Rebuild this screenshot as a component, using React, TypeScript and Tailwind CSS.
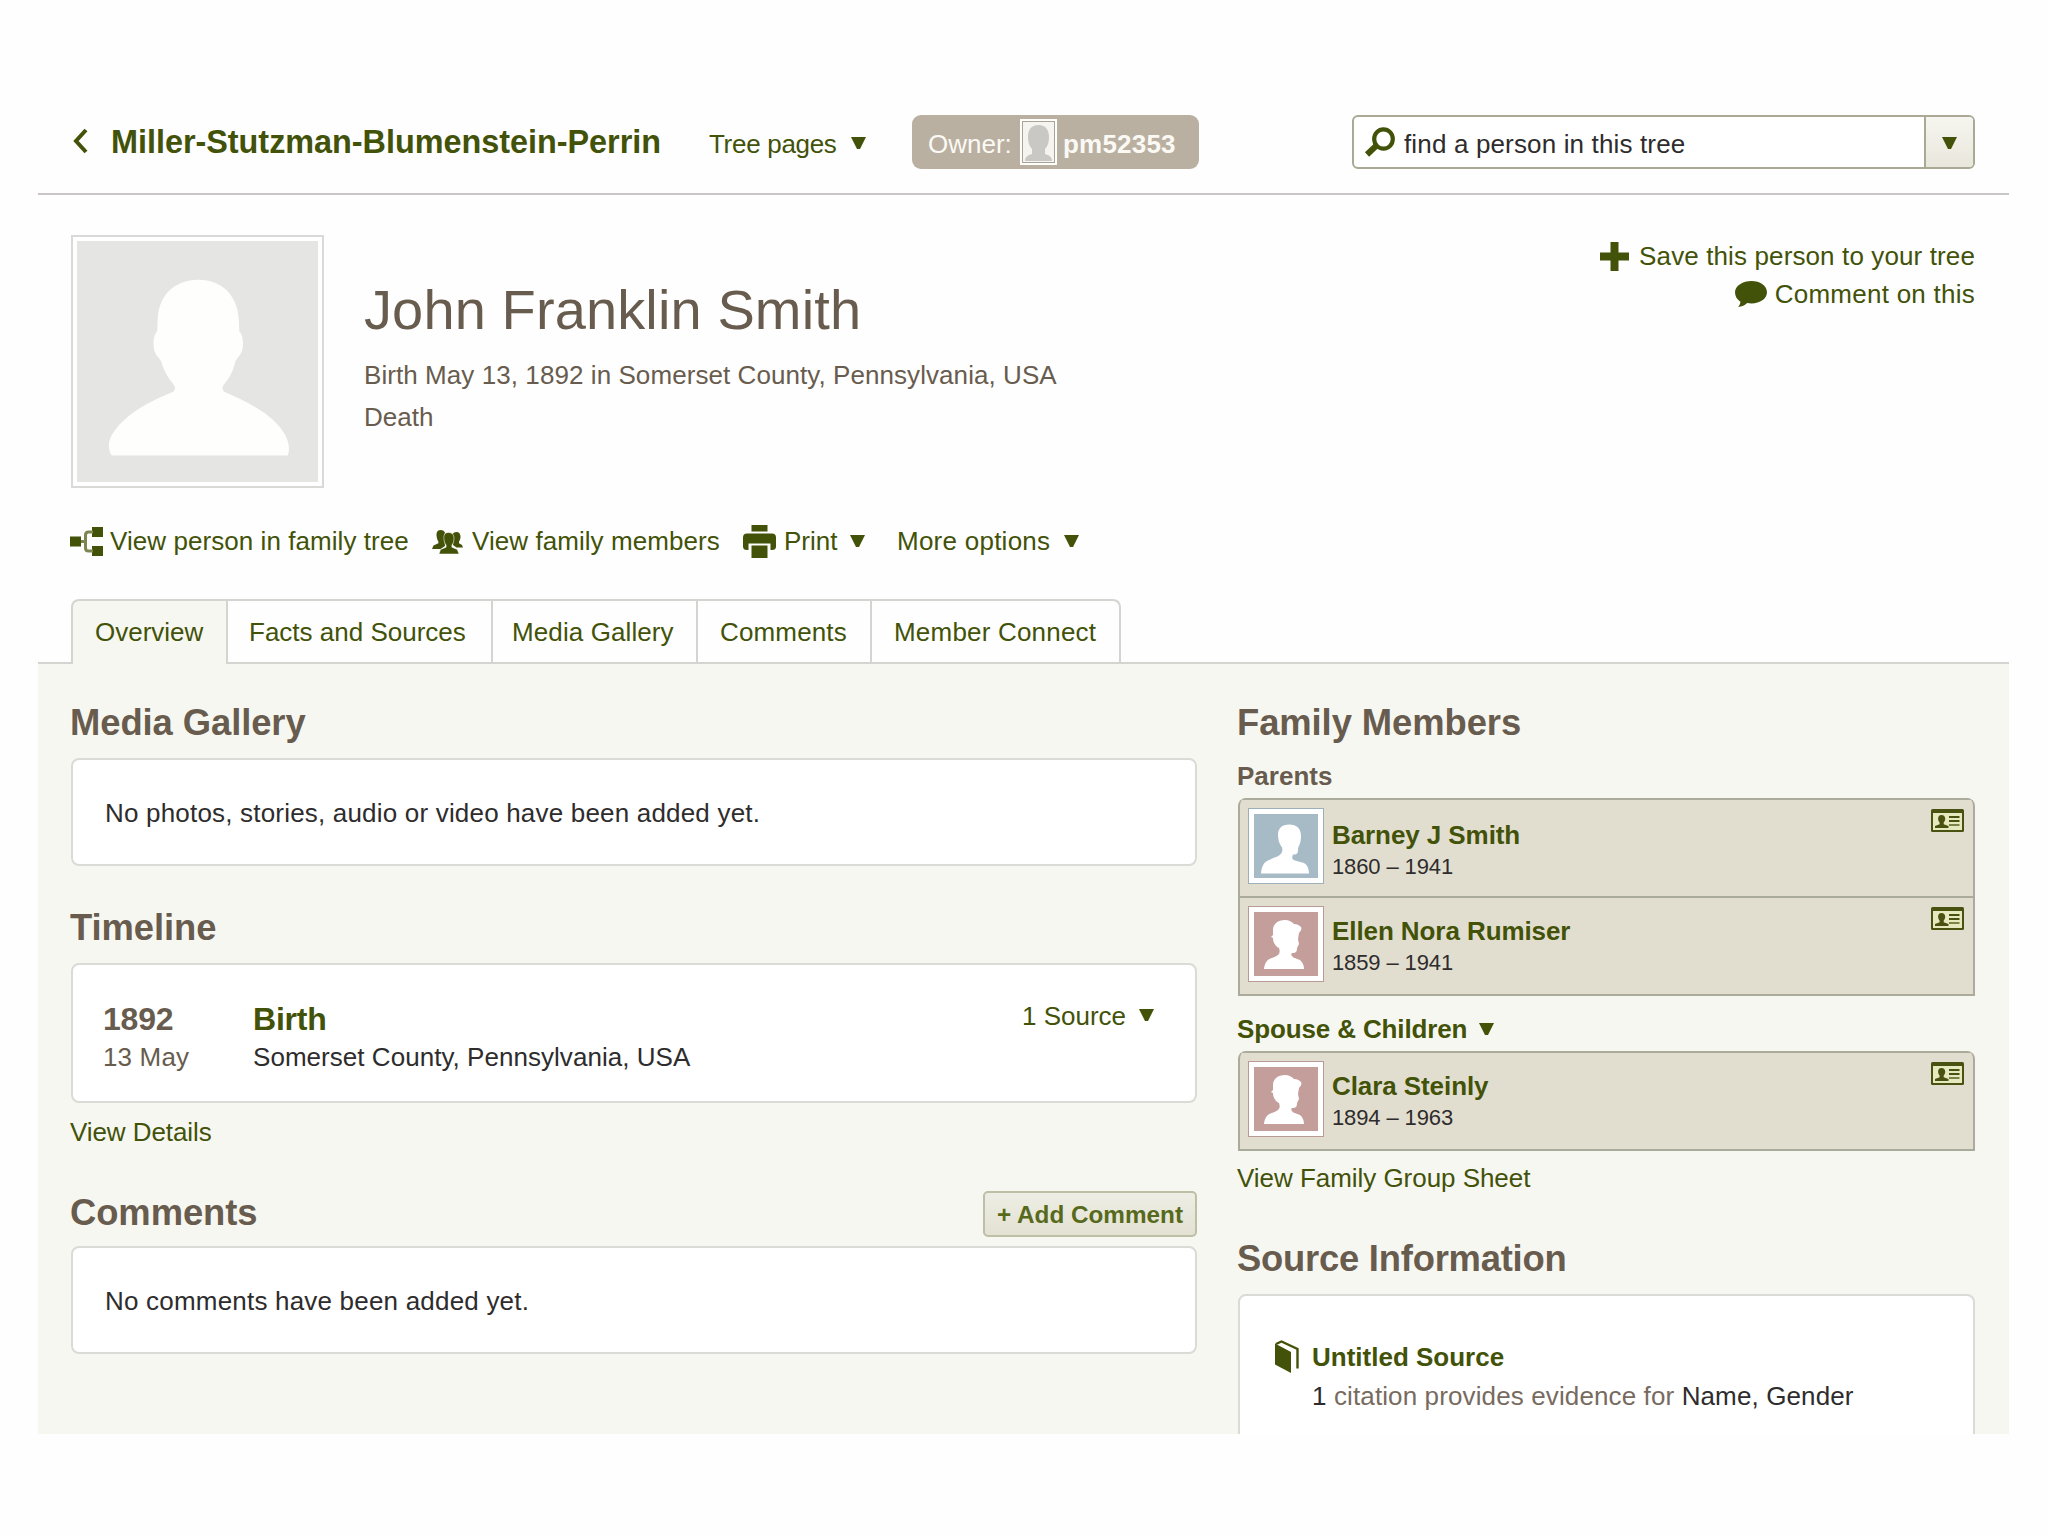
import type { ReactNode } from "react";

const tabs = [
  { name: "Overview", className: "w-[155px] bg-[#f7f7f2] rounded-tl-[8px] h-[65px] pl-[22px]" },
  { name: "Facts and Sources", className: "w-[265px] h-[63px] pl-[21px]" },
  { name: "Media Gallery", className: "w-[205px] h-[63px] pl-[19px] tracking-[0.1px]" },
  { name: "Comments", className: "w-[174px] h-[63px] pl-[22px] tracking-[0.15px]" },
  { name: "Member Connect", className: "w-[251px] h-[63px] border-r-2 rounded-tr-[8px] pl-[22px] tracking-[0.2px]" },
];

const parents = [
  { name: "Barney J Smith", years: "1860 – 1941", gender: "male", offset: "pt-[20px]" },
  { name: "Ellen Nora Rumiser", years: "1859 – 1941", gender: "female", offset: "pt-[18px]" },
];

const spouses = [
  { name: "Clara Steinly", years: "1894 – 1963", gender: "female", offset: "pt-[18px]" },
];

const Caret = ({ className = "" }: { className?: string }) => (
  <svg className={`h-[12px] w-[15px] shrink-0 fill-[#425208] ${className}`} viewBox="0 0 15 12">
    <path d="M0 0h15L9 12H6z" />
  </svg>
);

const Portrait = () => (
  <div className="h-[253px] w-[253px] shrink-0 border-2 border-[#d9d9d8] bg-white p-[4px]">
    <svg className="h-full w-full bg-[#e5e5e4]" viewBox="76 241 242 242">
      <path
        fill="#fefefd"
        d="M198 280c-25 0-40.500 17-41 40l-.5 12c-4 3-4.500 14-2.500 20 1.500 5 4.500 6 6.500 10 3 9 6 15 11 21 4 5 4 7 0 10-14 6-32 14-45 25-11 9-18.500 20-18.500 28 0 4 1 8 3 10.500h176.500c1.500-3 1.500-7 1-11-1-8-8.500-19.500-19.500-28-13-11-31-18.500-44-24.500-4-3-4-5 0-10 5-6 8-12 10-21 2-4 5-6 6.500-10 2-6 1.500-17-2.500-20l-.5-12c-1-23-16-40-40.500-40z"
      />
    </svg>
  </div>
);

const Avatar = ({ gender }: { gender: string }) => (
  <div
    className={`h-[76px] w-[76px] shrink-0 border bg-white p-[5px] ${
      gender === "male" ? "border-[#9db0b9]" : "border-[#b99a97]"
    }`}
  >
    <svg
      className={`h-full w-full ${gender === "male" ? "bg-[#a6bbc6]" : "bg-[#c39e9b]"}`}
      viewBox="0 0 64 64"
    >
      {gender === "male" ? (
        <path
          fill="#fff"
          d="M35 10.500c-7 0-11 4-11 10 0 5 1 9 4 13 1 3 0 6-3 8-5 3-12 4-15 8-2 3-3 7-3 10h48c0-3-1-7-3-9-3-3-10-3-13-5-1-1-1-3 0-5 5 0 5-2 5-6 1-3 3-6 3-12 0-8-4-12-12-12z"
        />
      ) : (
        <path
          fill="#fff"
          d="M31 8c-7 0-12 4-12 10v5l-2 2 2 1c0 4 2 8 6 10 1 3 1 5-1 7-4 3-9 3-11 6-2 2-3 6-3 8h40c0-3-1-6-3-8-3-3-7-2-9-5-1-1-1-2 0-3 4 0 5-1 5-5l2-4-1-5 1-6c2-2 3-4 2-6-2-2-4-3-7-3-2-2-5-4-9-4z"
        />
      )}
    </svg>
  </div>
);

const CardIcon = () => (
  <svg className="h-[23px] w-[33px]" viewBox="0 0 33 23">
    <rect width="33" height="23" rx="1.500" fill="#4a5212" />
    <rect x="2" y="4" width="29" height="17" fill="#e6e8bd" />
    <path
      fill="#4a5212"
      d="M10.500 6c-2.300 0-3.400 1.600-3.400 3.500 0 1.700.6 3 1.500 4v1.700L4 17v2h13.500v-2l-4.800-1.800v-1.700c.9-1 1.500-2.300 1.500-4 0-1.900-1.400-3.500-3.700-3.500zM18 7h10.500v2H18zM18 11h10.500v2H18z"
    />
    <path fill="#7d8348" d="M18 15h10.500v2H18z" />
  </svg>
);

const PersonRow = ({ person }: { person: (typeof parents)[number] }) => (
  <li className="flex h-[96px] box-content border-t-2 border-[#abab9c] pl-[8px] pr-[9px]">
    <div className="pt-[8px]">
      <Avatar gender={person.gender} />
    </div>
    <div className={`ml-[8px] flex-1 ${person.offset}`}>
      <p className="text-[26px] leading-[30px] font-bold tracking-[-0.08px]">{person.name}</p>
      <p className="mt-[3px] text-[22px] leading-[28px] tracking-[-0.12px] text-[#2e2c2c]">{person.years}</p>
    </div>
    <div className="pt-[9px]">
      <CardIcon />
    </div>
  </li>
);

const PersonList = ({ people }: { people: typeof parents }) => (
  <ul className="mt-[6px] overflow-hidden rounded-t-[8px] border-x-2 border-b-2 border-[#abab9c] bg-[#e2decf]">
    {people.map((person) => (
      <PersonRow key={person.name} person={person} />
    ))}
  </ul>
);

const Heading = ({ children }: { children: ReactNode }) => (
  <h2 className="-ml-px text-[36.4px] leading-[40px] font-bold tracking-[-0.08px] text-[#685c4e]">{children}</h2>
);

const Header = () => (
  <header className="flex h-[80px] items-start border-b-2 border-[#c9c6c5] pl-[34px] pr-[34px]">
    <div className="flex h-[54px] w-full items-center">
      <svg className="-mt-[3px] h-[26px] w-[16px]" viewBox="0 0 16 26">
        <path d="M14 2 4 13l10 11" fill="none" stroke="#425208" strokeWidth="4" />
      </svg>
      <h1 className="ml-[23px] w-[598px] text-[32.4px] leading-[40px] font-bold tracking-[-0.02px]">
        Miller-Stutzman-Blumenstein-Perrin
      </h1>
      <span className="mt-1 w-[142px] leading-[32px] tracking-[-0.3px]">Tree pages</span>
      <Caret className="mt-[2px]" />
      <div className="ml-[46px] flex h-[54px] w-[287px] items-center rounded-[9px] bg-[#bab0a2] pl-[16px] text-[#fbf9f4]">
        <span className="mt-1 w-[92px] leading-[32px]">Owner:</span>
        <svg className="h-[46px] w-[37px]" viewBox="0 0 37 46">
          <rect width="37" height="46" fill="#fffefa" />
          <rect x="2.500" y="2.500" width="32" height="41" fill="#f6f4ee" stroke="#a9a296" />
          <path fill="#c9c8c4" d="M5 42c0-4 3-6 7-7V30c-3-3-4-7-4-12 0-8 4-12 10.500-12S29 10 29 18c0 5-1 9-4 12v5c4 1 7 3 7 7z" />
        </svg>
        <span className="mt-1 ml-[6px] leading-[32px] font-bold tracking-[0.2px]">pm52353</span>
      </div>
      <div className="ml-auto flex h-[54px] w-[623px] items-center rounded-[6px] border-2 border-[#a9a995] bg-white">
        <svg className="ml-[10px] h-[30px] w-[31px]" viewBox="0 0 31 30">
          <ellipse cx="19.500" cy="12" rx="9.300" ry="9.700" fill="none" stroke="#425208" strokeWidth="4.200" />
          <path d="M12 19 3 27.500" stroke="#425208" strokeWidth="6" />
        </svg>
        <span className="mt-1 ml-[9px] flex-1 leading-[32px] tracking-[0.15px] text-[#2e2c2c]">find a person in this tree</span>
        <div className="flex h-full w-[49px] items-center justify-center rounded-r-[4px] border-l-2 border-[#a9a995] bg-linear-to-b from-[#f6f5ef] to-[#e9e7dc]">
          <Caret className="mt-[2px]" />
        </div>
      </div>
    </div>
  </header>
);

const Profile = () => (
  <section className="flex pl-[33px] pr-[34px] pt-[40px]">
    <Portrait />
    <div className="ml-[40px] pt-[43px] text-[#685c4e]">
      <h1 className="text-[56px] leading-[64px] tracking-[0.12px]">John Franklin Smith</h1>
      <p className="mt-[12px] leading-[42px] tracking-[0.07px]">Birth May 13, 1892 in Somerset County, Pennsylvania, USA</p>
      <p className="leading-[42px]">Death</p>
    </div>
    <div className="ml-auto flex flex-col items-end pt-[2px]">
      <a className="flex items-center leading-[38px] tracking-[0.12px]">
        <svg className="mr-[10px] h-[29px] w-[29px] fill-[#425208]" viewBox="0 0 29 29">
          <path d="M10.500 0h8v10.500H29v8H18.500V29h-8V18.500H0v-8h10.500z" />
        </svg>
        Save this person to your tree
      </a>
      <a className="flex items-center leading-[38px] tracking-[0.25px]">
        <svg className="mr-[8px] h-[26px] w-[32px] fill-[#425208]" viewBox="0 0 32 26">
          <path d="M16.500 0C25 0 32 4.800 32 11.300S25 22.500 16.500 22.500c-1.500 0-3-.1-4.300-.4C10 24.300 7 25.700 3 26c1.500-1.500 2.300-3.200 2.400-5.300C2 18.600 0 15.300 0 11.300 0 4.800 8 0 16.500 0z" />
        </svg>
        Comment on this
      </a>
    </div>
  </section>
);

const Toolbar = () => (
  <nav className="mt-[34px] flex h-[38px] items-center pl-[32px] leading-[40px]">
    <svg className="h-[29px] w-[33px] fill-[#425208]" viewBox="0 0 33 29">
      <path d="M0 9.500h11v10H0zM22 0h11v10H22zM22 19h11v10H22z" />
      <path d="M11 14.500h4.500M23 5h-4.500q-3 0-3 3v13q0 3 3 3H23" fill="none" stroke="#7c8652" strokeWidth="3" />
    </svg>
    <a className="ml-[7px] w-[322px] tracking-[0.06px]">View person in family tree</a>
    <svg className="h-[25px] w-[31px] fill-[#425208]" viewBox="0 0 31 25">
      <path d="M8.500 1C5 1 4.300 4 4.600 7c.2 2.600 1 4.500 1.800 5.500v1.800L1.500 16.500 0 20h8.500l4.500-3-1-10.500 1-3C12 1.800 10.500 1 8.500 1zM24.500 3c-2 0-3 .8-3.700 2l1 4-.8 7 3.500 2.500H31L30 16l-3-1.700v-1.700c1-1.300 1.500-3 1.500-5C28.500 4.700 27 3 24.500 3z" />
      <path d="M16.500 3.500c-4 0-5 3-4.600 6.300.2 3 1.100 5 2.200 6.200v2.200L8.500 20.500 7 25h20l-1.700-4.500-5.400-2.300V16c1.200-1.300 2-3.500 2.100-6.200.2-3.500-1.500-6.300-5.500-6.300z" stroke="#fff" strokeWidth=".5" />
    </svg>
    <a className="ml-[9px] w-[271px] tracking-[0.06px]">View family members</a>
    <svg className="h-[33px] w-[33px] fill-[#425208]" viewBox="0 0 33 33">
      <path d="M8.500 0h16v6.500h-16zM4 8.500h25q4 0 4 4v9q0 3.500-4 3.500h-1.500v-6.500h-22V25H4q-4 0-4-3.500v-9q0-4 4-4zM8.500 20.500h16V33h-16z" />
    </svg>
    <a className="ml-[8px] w-[66px]">Print</a>
    <Caret />
    <a className="ml-[32px] w-[167px] tracking-[0.25px]">More options</a>
    <Caret />
  </nav>
);

const Tabs = () => (
  <div className="mt-[39px] flex h-[63px] items-start pl-[33px]">
    {tabs.map((tab) => (
      <a
        key={tab.name}
        className={`relative border-l-2 border-t-2 border-[#d4d4d1] leading-[62px] whitespace-nowrap ${tab.className}`}
      >
        {tab.name}
      </a>
    ))}
  </div>
);

const Overview = () => (
  <main className="flex h-[772px] gap-[41px] overflow-hidden border-t-2 border-[#d4d4d1] bg-[#f7f7f2] pl-[33px] pr-[34px] pt-[39px]">
    <div className="w-[1126px]">
      <Heading>Media Gallery</Heading>
      <div className="mt-[15px] h-[108px] rounded-[8px] border-2 border-[#dadad7] bg-white pt-[37px] pl-[32px] leading-[32px] tracking-[0.19px] text-[#2e2c2c]">
        No photos, stories, audio or video have been added yet.
      </div>

      <div className="mt-[42px]">
        <Heading>Timeline</Heading>
      </div>
      <div className="mt-[15px] flex h-[140px] rounded-[8px] border-2 border-[#dadad7] bg-white pt-[36px] pl-[30px] text-[#685c4e]">
        <div className="w-[150px]">
          <p className="text-[32px] leading-[36px] font-bold tracking-[-0.2px]">1892</p>
          <p className="leading-[40px] tracking-[0.15px]">13 May</p>
        </div>
        <div className="flex-1">
          <p className="text-[32px] leading-[36px] font-bold tracking-[-0.2px] text-[#425208]">Birth</p>
          <p className="leading-[40px] tracking-[0.04px] text-[#2e2c2c]">Somerset County, Pennsylvania, USA</p>
        </div>
        <div className="flex w-[173px] items-start text-[#425208]">
          <span className="w-[117px] leading-[30px]">1 Source</span>
          <Caret className="mt-[8px]" />
        </div>
      </div>
      <a className="-ml-px mt-[13px] block leading-[32px] tracking-[-0.08px]">View Details</a>

      <div className="mt-[45px] flex h-[53px] items-start justify-between">
        <Heading>Comments</Heading>
        <button className="-mt-[2px] h-[46px] w-[214px] rounded-[5px] border-2 border-[#bfbfa8] bg-linear-to-b from-[#efeee5] to-[#e2e1d2] text-[24.3px] leading-[43px] font-bold text-[#576a1c]">
          + Add Comment
        </button>
      </div>
      <div className="h-[108px] rounded-[8px] border-2 border-[#dadad7] bg-white pt-[37px] pl-[32px] leading-[32px] tracking-[0.2px] text-[#2e2c2c]">
        No comments have been added yet.
      </div>
    </div>

    <div className="w-[737px]">
      <Heading>Family Members</Heading>
      <h3 className="-ml-px mt-[17px] leading-[32px] font-bold text-[#685c4e]">Parents</h3>
      <PersonList people={parents} />
      <h3 className="-ml-px mt-[17px] flex items-center leading-[32px] font-bold tracking-[-0.13px]">
        Spouse &amp; Children
        <Caret className="ml-[12px]" />
      </h3>
      <PersonList people={spouses} />
      <a className="-ml-px mt-[11px] block leading-[32px] tracking-[-0.04px]">View Family Group Sheet</a>

      <div className="mt-[45px] tracking-[-0.2px]">
        <h2 className="-ml-px text-[36.4px] leading-[40px] font-bold tracking-[-0.23px] text-[#685c4e]">
          Source Information
        </h2>
      </div>
      <div className="mt-[15px] flex h-[160px] rounded-t-[8px] border-2 border-[#dadad7] bg-white pt-[44px] pl-[35px]">
        <svg className="h-[33px] w-[24px]" viewBox="0 0 24 33">
          <path fill="#425208" d="M0 3.500 16 12v21L0 24.500z" />
          <path fill="none" stroke="#425208" strokeWidth="2.400" d="M1 4 6.500 1.500 22.500 9v19.500" />
        </svg>
        <div className="ml-[13px] pt-px">
          <p className="leading-[32px] font-bold">Untitled Source</p>
          <p className="mt-[7px] leading-[32px] tracking-[0.12px] text-[#776b5f]">
            <span className="text-[#2e2c2c]">1</span> citation provides evidence for{" "}
            <span className="text-[#2e2c2c]">Name, Gender</span>
          </p>
        </div>
      </div>
    </div>
  </main>
);

const App = () => {
  return (
    <div className="h-[1536px] w-[2048px] overflow-hidden bg-[#fefefe] pt-[115px] pl-[38px] font-['Liberation_Sans',Arial,sans-serif] text-[26px] text-[#425208]">
      <div className="w-[1971px]">
        <Header />
        <Profile />
        <Toolbar />
        <Tabs />
        <Overview />
      </div>
    </div>
  );
};

export default App;
